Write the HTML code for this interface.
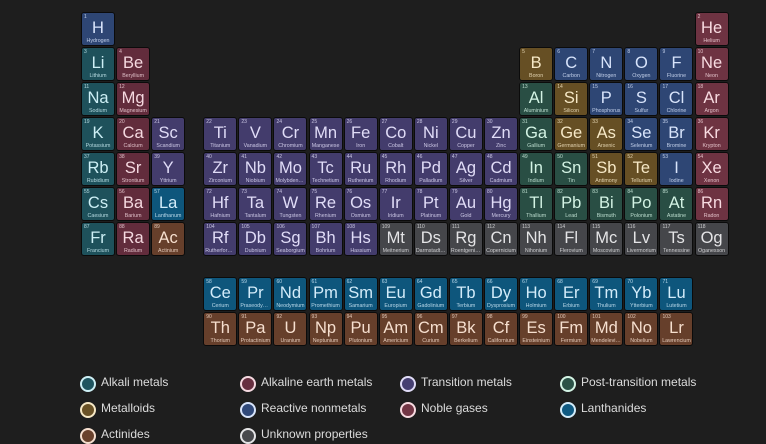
<!DOCTYPE html>
<html><head><meta charset="utf-8"><style>
*{margin:0;padding:0;box-sizing:border-box}
body{width:766px;height:444px;background:#1e1e1e;font-family:"Liberation Sans",sans-serif;overflow:hidden;position:relative}
#g{position:absolute;left:81px;top:12px;display:grid;grid-template-columns:34px 34px 34px 15.9px repeat(15,34px);grid-template-rows:repeat(7,34px) 19px 34px 34px;column-gap:1.1px;row-gap:1px}
.c{position:relative;border:1px solid #0b0b0b;border-radius:3px;overflow:hidden}
.c i{position:absolute;left:2px;top:1px;font-style:normal;font-size:5px;opacity:.85}
.c b{position:absolute;left:0;right:0;top:6px;text-align:center;font-weight:normal;font-size:16.5px;line-height:18px}
.c s{position:absolute;left:1px;right:1px;top:25px;text-align:center;text-decoration:none;font-size:5.3px;white-space:nowrap;overflow:hidden;text-overflow:ellipsis;opacity:.85}
.a{background:#1e515b;color:#cdeff5}.e{background:#622c3c;color:#f5d9e0}.t{background:#433c6c;color:#e0dcf7}
.p{background:#294e44;color:#d3f3e4}.m{background:#664f24;color:#f6e8c6}.n{background:#2e4674;color:#d8e4fb}
.g{background:#6e3342;color:#f8dbe1}.l{background:#0e567c;color:#d3ecfa}.k{background:#663f2b;color:#f6dfcf}
.u{background:#45464a;color:#e4e4e6}
.lg{position:absolute;font-size:12px;color:#dcdcdc;padding-left:21px;line-height:14px}
.lg:before{content:"";position:absolute;left:0;top:1px;width:12px;height:12px;border-radius:50%;border:2px solid var(--r);background:var(--f)}
</style></head><body>
<div id="g">
<div class="c n" style="grid-area:1/1"><i>1</i><b>H</b><s>Hydrogen</s></div>
<div class="c g" style="grid-area:1/19"><i>2</i><b>He</b><s>Helium</s></div>
<div class="c a" style="grid-area:2/1"><i>3</i><b>Li</b><s>Lithium</s></div>
<div class="c e" style="grid-area:2/2"><i>4</i><b>Be</b><s>Beryllium</s></div>
<div class="c m" style="grid-area:2/14"><i>5</i><b>B</b><s>Boron</s></div>
<div class="c n" style="grid-area:2/15"><i>6</i><b>C</b><s>Carbon</s></div>
<div class="c n" style="grid-area:2/16"><i>7</i><b>N</b><s>Nitrogen</s></div>
<div class="c n" style="grid-area:2/17"><i>8</i><b>O</b><s>Oxygen</s></div>
<div class="c n" style="grid-area:2/18"><i>9</i><b>F</b><s>Fluorine</s></div>
<div class="c g" style="grid-area:2/19"><i>10</i><b>Ne</b><s>Neon</s></div>
<div class="c a" style="grid-area:3/1"><i>11</i><b>Na</b><s>Sodium</s></div>
<div class="c e" style="grid-area:3/2"><i>12</i><b>Mg</b><s>Magnesium</s></div>
<div class="c p" style="grid-area:3/14"><i>13</i><b>Al</b><s>Aluminium</s></div>
<div class="c m" style="grid-area:3/15"><i>14</i><b>Si</b><s>Silicon</s></div>
<div class="c n" style="grid-area:3/16"><i>15</i><b>P</b><s>Phosphorus</s></div>
<div class="c n" style="grid-area:3/17"><i>16</i><b>S</b><s>Sulfur</s></div>
<div class="c n" style="grid-area:3/18"><i>17</i><b>Cl</b><s>Chlorine</s></div>
<div class="c g" style="grid-area:3/19"><i>18</i><b>Ar</b><s>Argon</s></div>
<div class="c a" style="grid-area:4/1"><i>19</i><b>K</b><s>Potassium</s></div>
<div class="c e" style="grid-area:4/2"><i>20</i><b>Ca</b><s>Calcium</s></div>
<div class="c t" style="grid-area:4/3"><i>21</i><b>Sc</b><s>Scandium</s></div>
<div class="c t" style="grid-area:4/5"><i>22</i><b>Ti</b><s>Titanium</s></div>
<div class="c t" style="grid-area:4/6"><i>23</i><b>V</b><s>Vanadium</s></div>
<div class="c t" style="grid-area:4/7"><i>24</i><b>Cr</b><s>Chromium</s></div>
<div class="c t" style="grid-area:4/8"><i>25</i><b>Mn</b><s>Manganese</s></div>
<div class="c t" style="grid-area:4/9"><i>26</i><b>Fe</b><s>Iron</s></div>
<div class="c t" style="grid-area:4/10"><i>27</i><b>Co</b><s>Cobalt</s></div>
<div class="c t" style="grid-area:4/11"><i>28</i><b>Ni</b><s>Nickel</s></div>
<div class="c t" style="grid-area:4/12"><i>29</i><b>Cu</b><s>Copper</s></div>
<div class="c t" style="grid-area:4/13"><i>30</i><b>Zn</b><s>Zinc</s></div>
<div class="c p" style="grid-area:4/14"><i>31</i><b>Ga</b><s>Gallium</s></div>
<div class="c m" style="grid-area:4/15"><i>32</i><b>Ge</b><s>Germanium</s></div>
<div class="c m" style="grid-area:4/16"><i>33</i><b>As</b><s>Arsenic</s></div>
<div class="c n" style="grid-area:4/17"><i>34</i><b>Se</b><s>Selenium</s></div>
<div class="c n" style="grid-area:4/18"><i>35</i><b>Br</b><s>Bromine</s></div>
<div class="c g" style="grid-area:4/19"><i>36</i><b>Kr</b><s>Krypton</s></div>
<div class="c a" style="grid-area:5/1"><i>37</i><b>Rb</b><s>Rubidium</s></div>
<div class="c e" style="grid-area:5/2"><i>38</i><b>Sr</b><s>Strontium</s></div>
<div class="c t" style="grid-area:5/3"><i>39</i><b>Y</b><s>Yttrium</s></div>
<div class="c t" style="grid-area:5/5"><i>40</i><b>Zr</b><s>Zirconium</s></div>
<div class="c t" style="grid-area:5/6"><i>41</i><b>Nb</b><s>Niobium</s></div>
<div class="c t" style="grid-area:5/7"><i>42</i><b>Mo</b><s>Molybdenum</s></div>
<div class="c t" style="grid-area:5/8"><i>43</i><b>Tc</b><s>Technetium</s></div>
<div class="c t" style="grid-area:5/9"><i>44</i><b>Ru</b><s>Ruthenium</s></div>
<div class="c t" style="grid-area:5/10"><i>45</i><b>Rh</b><s>Rhodium</s></div>
<div class="c t" style="grid-area:5/11"><i>46</i><b>Pd</b><s>Palladium</s></div>
<div class="c t" style="grid-area:5/12"><i>47</i><b>Ag</b><s>Silver</s></div>
<div class="c t" style="grid-area:5/13"><i>48</i><b>Cd</b><s>Cadmium</s></div>
<div class="c p" style="grid-area:5/14"><i>49</i><b>In</b><s>Indium</s></div>
<div class="c p" style="grid-area:5/15"><i>50</i><b>Sn</b><s>Tin</s></div>
<div class="c m" style="grid-area:5/16"><i>51</i><b>Sb</b><s>Antimony</s></div>
<div class="c m" style="grid-area:5/17"><i>52</i><b>Te</b><s>Tellurium</s></div>
<div class="c n" style="grid-area:5/18"><i>53</i><b>I</b><s>Iodine</s></div>
<div class="c g" style="grid-area:5/19"><i>54</i><b>Xe</b><s>Xenon</s></div>
<div class="c a" style="grid-area:6/1"><i>55</i><b>Cs</b><s>Caesium</s></div>
<div class="c e" style="grid-area:6/2"><i>56</i><b>Ba</b><s>Barium</s></div>
<div class="c l" style="grid-area:6/3"><i>57</i><b>La</b><s>Lanthanum</s></div>
<div class="c t" style="grid-area:6/5"><i>72</i><b>Hf</b><s>Hafnium</s></div>
<div class="c t" style="grid-area:6/6"><i>73</i><b>Ta</b><s>Tantalum</s></div>
<div class="c t" style="grid-area:6/7"><i>74</i><b>W</b><s>Tungsten</s></div>
<div class="c t" style="grid-area:6/8"><i>75</i><b>Re</b><s>Rhenium</s></div>
<div class="c t" style="grid-area:6/9"><i>76</i><b>Os</b><s>Osmium</s></div>
<div class="c t" style="grid-area:6/10"><i>77</i><b>Ir</b><s>Iridium</s></div>
<div class="c t" style="grid-area:6/11"><i>78</i><b>Pt</b><s>Platinum</s></div>
<div class="c t" style="grid-area:6/12"><i>79</i><b>Au</b><s>Gold</s></div>
<div class="c t" style="grid-area:6/13"><i>80</i><b>Hg</b><s>Mercury</s></div>
<div class="c p" style="grid-area:6/14"><i>81</i><b>Tl</b><s>Thallium</s></div>
<div class="c p" style="grid-area:6/15"><i>82</i><b>Pb</b><s>Lead</s></div>
<div class="c p" style="grid-area:6/16"><i>83</i><b>Bi</b><s>Bismuth</s></div>
<div class="c p" style="grid-area:6/17"><i>84</i><b>Po</b><s>Polonium</s></div>
<div class="c p" style="grid-area:6/18"><i>85</i><b>At</b><s>Astatine</s></div>
<div class="c g" style="grid-area:6/19"><i>86</i><b>Rn</b><s>Radon</s></div>
<div class="c a" style="grid-area:7/1"><i>87</i><b>Fr</b><s>Francium</s></div>
<div class="c e" style="grid-area:7/2"><i>88</i><b>Ra</b><s>Radium</s></div>
<div class="c k" style="grid-area:7/3"><i>89</i><b>Ac</b><s>Actinium</s></div>
<div class="c t" style="grid-area:7/5"><i>104</i><b>Rf</b><s>Rutherfordium</s></div>
<div class="c t" style="grid-area:7/6"><i>105</i><b>Db</b><s>Dubnium</s></div>
<div class="c t" style="grid-area:7/7"><i>106</i><b>Sg</b><s>Seaborgium</s></div>
<div class="c t" style="grid-area:7/8"><i>107</i><b>Bh</b><s>Bohrium</s></div>
<div class="c t" style="grid-area:7/9"><i>108</i><b>Hs</b><s>Hassium</s></div>
<div class="c u" style="grid-area:7/10"><i>109</i><b>Mt</b><s>Meitnerium</s></div>
<div class="c u" style="grid-area:7/11"><i>110</i><b>Ds</b><s>Darmstadtium</s></div>
<div class="c u" style="grid-area:7/12"><i>111</i><b>Rg</b><s>Roentgenium</s></div>
<div class="c u" style="grid-area:7/13"><i>112</i><b>Cn</b><s>Copernicium</s></div>
<div class="c u" style="grid-area:7/14"><i>113</i><b>Nh</b><s>Nihonium</s></div>
<div class="c u" style="grid-area:7/15"><i>114</i><b>Fl</b><s>Flerovium</s></div>
<div class="c u" style="grid-area:7/16"><i>115</i><b>Mc</b><s>Moscovium</s></div>
<div class="c u" style="grid-area:7/17"><i>116</i><b>Lv</b><s>Livermorium</s></div>
<div class="c u" style="grid-area:7/18"><i>117</i><b>Ts</b><s>Tennessine</s></div>
<div class="c u" style="grid-area:7/19"><i>118</i><b>Og</b><s>Oganesson</s></div>
<div class="c l" style="grid-area:9/5"><i>58</i><b>Ce</b><s>Cerium</s></div>
<div class="c l" style="grid-area:9/6"><i>59</i><b>Pr</b><s>Praseodymium</s></div>
<div class="c l" style="grid-area:9/7"><i>60</i><b>Nd</b><s>Neodymium</s></div>
<div class="c l" style="grid-area:9/8"><i>61</i><b>Pm</b><s>Promethium</s></div>
<div class="c l" style="grid-area:9/9"><i>62</i><b>Sm</b><s>Samarium</s></div>
<div class="c l" style="grid-area:9/10"><i>63</i><b>Eu</b><s>Europium</s></div>
<div class="c l" style="grid-area:9/11"><i>64</i><b>Gd</b><s>Gadolinium</s></div>
<div class="c l" style="grid-area:9/12"><i>65</i><b>Tb</b><s>Terbium</s></div>
<div class="c l" style="grid-area:9/13"><i>66</i><b>Dy</b><s>Dysprosium</s></div>
<div class="c l" style="grid-area:9/14"><i>67</i><b>Ho</b><s>Holmium</s></div>
<div class="c l" style="grid-area:9/15"><i>68</i><b>Er</b><s>Erbium</s></div>
<div class="c l" style="grid-area:9/16"><i>69</i><b>Tm</b><s>Thulium</s></div>
<div class="c l" style="grid-area:9/17"><i>70</i><b>Yb</b><s>Ytterbium</s></div>
<div class="c l" style="grid-area:9/18"><i>71</i><b>Lu</b><s>Lutetium</s></div>
<div class="c k" style="grid-area:10/5"><i>90</i><b>Th</b><s>Thorium</s></div>
<div class="c k" style="grid-area:10/6"><i>91</i><b>Pa</b><s>Protactinium</s></div>
<div class="c k" style="grid-area:10/7"><i>92</i><b>U</b><s>Uranium</s></div>
<div class="c k" style="grid-area:10/8"><i>93</i><b>Np</b><s>Neptunium</s></div>
<div class="c k" style="grid-area:10/9"><i>94</i><b>Pu</b><s>Plutonium</s></div>
<div class="c k" style="grid-area:10/10"><i>95</i><b>Am</b><s>Americium</s></div>
<div class="c k" style="grid-area:10/11"><i>96</i><b>Cm</b><s>Curium</s></div>
<div class="c k" style="grid-area:10/12"><i>97</i><b>Bk</b><s>Berkelium</s></div>
<div class="c k" style="grid-area:10/13"><i>98</i><b>Cf</b><s>Californium</s></div>
<div class="c k" style="grid-area:10/14"><i>99</i><b>Es</b><s>Einsteinium</s></div>
<div class="c k" style="grid-area:10/15"><i>100</i><b>Fm</b><s>Fermium</s></div>
<div class="c k" style="grid-area:10/16"><i>101</i><b>Md</b><s>Mendelevium</s></div>
<div class="c k" style="grid-area:10/17"><i>102</i><b>No</b><s>Nobelium</s></div>
<div class="c k" style="grid-area:10/18"><i>103</i><b>Lr</b><s>Lawrencium</s></div>
</div>
<div class="lg" style="left:80px;top:375px;--r:#cdeff5;--f:#1f5560">Alkali metals</div>
<div class="lg" style="left:240px;top:375px;--r:#f5d9e0;--f:#672f40">Alkaline earth metals</div>
<div class="lg" style="left:400px;top:375px;--r:#e0dcf7;--f:#463f72">Transition metals</div>
<div class="lg" style="left:560px;top:375px;--r:#d3f3e4;--f:#2b5247">Post-transition metals</div>
<div class="lg" style="left:80px;top:401px;--r:#f6e8c6;--f:#6a5226">Metalloids</div>
<div class="lg" style="left:240px;top:401px;--r:#d8e4fb;--f:#30497a">Reactive nonmetals</div>
<div class="lg" style="left:400px;top:401px;--r:#f8dbe1;--f:#733645">Noble gases</div>
<div class="lg" style="left:560px;top:401px;--r:#d3ecfa;--f:#0f5a82">Lanthanides</div>
<div class="lg" style="left:80px;top:427px;--r:#f6dfcf;--f:#6a422d">Actinides</div>
<div class="lg" style="left:240px;top:427px;--r:#e4e4e6;--f:#48494d">Unknown properties</div>
</body></html>
